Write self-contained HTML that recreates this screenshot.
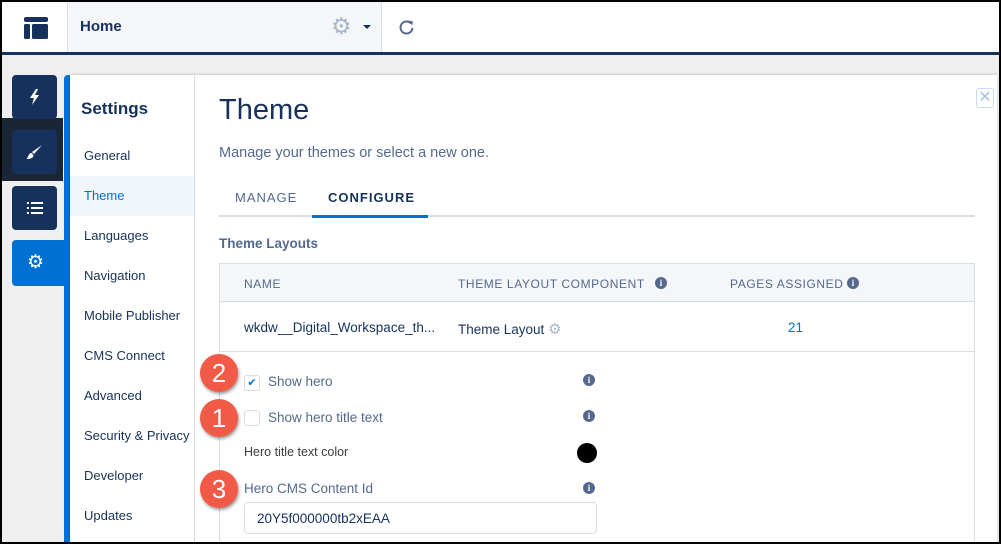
<!DOCTYPE html><html><head><style>
*{margin:0;padding:0;box-sizing:border-box}
html,body{width:1001px;height:544px;overflow:hidden}
body{font-family:"Liberation Sans",sans-serif;background:#000;position:relative}
.a{position:absolute}
.info{position:absolute;width:12px;height:12px;border-radius:50%;background:#54698d;color:#fff;font:bold 9px/12px "Liberation Serif",serif;text-align:center}
.num{position:absolute;width:38px;height:38px;border-radius:50%;background:#f05a47;color:#fff;font:26px/38px "Liberation Sans",sans-serif;text-align:center;box-shadow:1px 2px 3px rgba(0,0,0,.4)}
.nav{position:absolute;left:84px;font-size:13px;color:#16325c}
</style></head><body>
<div class="a" style="left:2px;top:2px;width:997px;height:540px;background:#efefef;overflow:hidden">
 <div class="a" style="left:0;top:0;width:997px;height:50px;background:#fff"></div>
 <div class="a" style="left:65px;top:0;width:315px;height:50px;background:#f4f6f9;border-left:1px solid #d8dde6;border-right:1px solid #d8dde6"></div>
 <div class="a" style="left:0;top:50px;width:997px;height:3px;background:#16325c"></div>
 <svg class="a" style="left:22px;top:15px" width="24" height="23"><rect x="0" y="0" width="24" height="5" rx="2" fill="#16325c"/><rect x="0" y="7" width="6" height="15" rx="1.5" fill="#16325c"/><rect x="8" y="7" width="16" height="15" rx="1.5" fill="#16325c"/></svg>
 <div class="a" style="left:78px;top:16px;font-size:15px;font-weight:bold;color:#16325c">Home</div>
 <div class="a" style="left:329px;top:11px;font-size:23px;color:#a8b7c7">⚙</div>
 <div class="a" style="left:361px;top:23px;width:0;height:0;border-left:4px solid transparent;border-right:4px solid transparent;border-top:4px solid #16325c"></div>
 <svg class="a" style="left:397px;top:17px" width="16" height="16"><path d="M12 4.5A6 6 0 1 0 13.5 9" fill="none" stroke="#54698d" stroke-width="2"/><path d="M9.5 1.5L14 2.5 13 6.5z" fill="#54698d"/></svg>
 <div class="a" style="left:0;top:116px;width:61px;height:63px;background:#1a2536"></div>
 <div class="a" style="left:10px;top:73px;width:45px;height:44px;background:#16325c;border-radius:4px"></div>
 <svg class="a" style="left:26px;top:87px" width="14" height="16"><path d="M8 0L2 9h4l-2 7 7-10H7l3-6z" fill="#fff"/></svg>
 <div class="a" style="left:10px;top:128px;width:45px;height:44px;background:#16325c;border-radius:4px"></div>
 <svg class="a" style="left:24px;top:142px" width="17" height="17"><path d="M16 1L8 10l-2-2z" fill="#fff"/><path d="M5.5 9c-3 0-3 4-5 6 4 0 7-1 7-4z" fill="#fff"/></svg>
 <div class="a" style="left:10px;top:184px;width:45px;height:44px;background:#16325c;border-radius:4px"></div>
 <svg class="a" style="left:25px;top:199px" width="16" height="14"><g fill="#fff"><rect x="0" y="1" width="2" height="2"/><rect x="4" y="1" width="12" height="2"/><rect x="0" y="6" width="2" height="2"/><rect x="4" y="6" width="12" height="2"/><rect x="0" y="11" width="2" height="2"/><rect x="4" y="11" width="12" height="2"/></g></svg>
 <div class="a" style="left:10px;top:238px;width:57px;height:46px;background:#0070d2;border-radius:4px 0 0 4px;color:#fff;text-align:center;font-size:19px;line-height:46px;padding-right:10px">⚙</div>
 <div class="a" style="left:62px;top:73px;width:6px;height:470px;background:#0070d2;border-radius:4px 0 0 0"></div>
 <div class="a" style="left:68px;top:73px;width:927px;height:470px;background:#fff;box-shadow:0 -1px 2px rgba(0,0,0,.15)"></div>
 <div class="a" style="left:192px;top:73px;width:1px;height:470px;background:#d8dde6"></div>
 <div class="a" style="left:79px;top:97px;font-size:17px;font-weight:bold;color:#16325c">Settings</div>
 <div class="a" style="left:68px;top:174px;width:124px;height:40px;background:#f0f6fa"></div>
 <div class="a" style="left:217px;top:261px;width:756px;height:300px;border:1px solid #d8dde6"></div>
</div>
<div class="nav" style="top:148px">General</div>
<div class="nav" style="top:188px;color:#0070d2">Theme</div>
<div class="nav" style="top:228px">Languages</div>
<div class="nav" style="top:268px">Navigation</div>
<div class="nav" style="top:308px">Mobile Publisher</div>
<div class="nav" style="top:348px">CMS Connect</div>
<div class="nav" style="top:388px">Advanced</div>
<div class="nav" style="top:428px">Security &amp; Privacy</div>
<div class="nav" style="top:468px">Developer</div>
<div class="nav" style="top:508px">Updates</div>
<div class="a" style="left:976px;top:88px;width:18px;height:20px;border:1px solid #c5dcf3;border-radius:3px;color:#a8c4e0;font-size:16px;line-height:18px;text-align:center">✕</div>
<div class="a" style="left:219px;top:94px;font-size:29px;color:#16325c">Theme</div>
<div class="a" style="left:219px;top:145px;font-size:14.5px;color:#54698d">Manage your themes or select a new one.</div>
<div class="a" style="left:219px;top:215px;width:756px;height:2px;background:#d8dde6"></div>
<div class="a" style="left:312px;top:215px;width:116px;height:3px;background:#0070d2"></div>
<div class="a" style="left:235px;top:190px;font-size:13px;letter-spacing:1px;color:#54698d">MANAGE</div>
<div class="a" style="left:328px;top:190px;font-size:13px;letter-spacing:1px;font-weight:bold;color:#16325c">CONFIGURE</div>
<div class="a" style="left:219px;top:236px;font-size:13.5px;font-weight:bold;color:#54698d">Theme Layouts</div>
<div class="a" style="left:220px;top:264px;width:754px;height:38px;background:#f4f6f9;border-bottom:1px solid #d8dde6"></div>
<div class="a" style="left:220px;top:351px;width:754px;height:1px;background:#d8dde6"></div>
<div class="a" style="left:244px;top:277px;font-size:12px;letter-spacing:.6px;color:#54698d">NAME</div>
<div class="a" style="left:458px;top:277px;font-size:12px;letter-spacing:.6px;color:#54698d">THEME LAYOUT COMPONENT</div>
<div class="info" style="left:655px;top:277px">i</div>
<div class="a" style="left:730px;top:277px;font-size:12px;letter-spacing:.6px;color:#54698d">PAGES ASSIGNED</div>
<div class="info" style="left:847px;top:277px">i</div>
<div class="a" style="left:244px;top:320px;font-size:13.5px;color:#16325c">wkdw__Digital_Workspace_th...</div>
<div class="a" style="left:458px;top:320px;font-size:13.5px;color:#16325c">Theme Layout <span style="color:#a8b7c7;font-size:15px">⚙</span></div>
<div class="a" style="left:788px;top:320px;font-size:13.5px;color:#0070d2">21</div>
<div class="a" style="left:244px;top:375px;width:16px;height:16px;border:1px solid #d8dde6;border-radius:3px;color:#0070d2;font-size:11px;line-height:14px;text-align:center">✔</div>
<div class="a" style="left:268px;top:374px;font-size:13.5px;color:#54698d">Show hero</div>
<div class="info" style="left:583px;top:374px">i</div>
<div class="a" style="left:244px;top:410px;width:16px;height:16px;border:1px solid #d8dde6;border-radius:3px"></div>
<div class="a" style="left:268px;top:410px;font-size:13.5px;color:#54698d">Show hero title text</div>
<div class="info" style="left:583px;top:410px">i</div>
<div class="a" style="left:244px;top:445px;font-size:12.5px;color:#3e3e3c">Hero title text color</div>
<div class="a" style="left:577px;top:443px;width:20px;height:20px;border-radius:50%;background:#000"></div>
<div class="a" style="left:244px;top:481px;font-size:13.5px;color:#54698d">Hero CMS Content Id</div>
<div class="info" style="left:583px;top:482px">i</div>
<div class="a" style="left:244px;top:502px;width:353px;height:32px;border:1px solid #d8dde6;border-radius:4px;font-size:13.5px;color:#16325c;padding:8px 0 0 12px">20Y5f000000tb2xEAA</div>
<div class="num" style="left:200px;top:354px">2</div>
<div class="num" style="left:200px;top:399px">1</div>
<div class="num" style="left:200px;top:470px">3</div>
</body></html>
